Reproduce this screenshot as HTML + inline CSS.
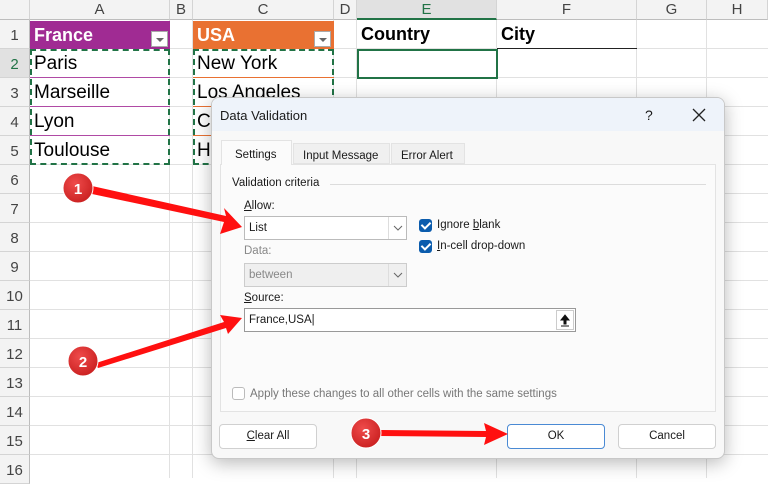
<!DOCTYPE html>
<html><head><style>
*{margin:0;padding:0;box-sizing:border-box}
body{width:768px;height:478px;overflow:hidden;background:#fff;font-family:"Liberation Sans",sans-serif;position:relative}
.a{position:absolute}
.colh{top:0;height:20px;background:#f3f3f3;border-right:1px solid #d4d4d4;border-bottom:1px solid #bdbdbd;text-align:center;font-size:15px;color:#444;line-height:20px}
.rowh{left:0;width:30px;height:29px;background:#f3f3f3;border-bottom:1px solid #d4d4d4;border-right:1px solid #bdbdbd;text-align:center;font-size:15px;color:#444;line-height:31px}
.vl{top:20px;width:1px;height:458px;background:#e1e1e1}
.hl{left:30px;height:1px;width:738px;background:#e1e1e1}
.cell{font-size:19px;color:#000;padding-left:4px;line-height:29px;height:29px}
.dd{width:17px;height:16px;background:#fff;border:1px solid #aaa;top:31px}
.dd:after{content:"";position:absolute;left:4px;top:6px;border:4px solid transparent;border-top:4px solid #666}
.dlg{left:211px;top:97px;width:514px;height:362px;background:#f8f8f8;border:1px solid #c8c8c8;border-radius:8px;box-shadow:0 4px 18px rgba(0,0,0,.28);font-size:11.5px;color:#1a1a1a;overflow:hidden}
.btn{height:25px;background:#fff;border:1px solid #d0d0d0;border-radius:4px;text-align:center;line-height:23px;font-size:11.5px}
.cb{width:13px;height:13px;background:#0b5cad;border-radius:3px}
.cb:after{content:"";position:absolute;left:4px;top:1px;width:4px;height:7px;border:solid #fff;border-width:0 2px 2px 0;transform:rotate(45deg)}
.chev{width:18px;height:22px;border-left:1px solid #ddd}
</style></head><body>
<div class="a colh" style="left:0;width:30px;background:#f3f3f3"></div>
<div class="a colh" style="left:30px;width:140px">A</div>
<div class="a colh" style="left:170px;width:23px">B</div>
<div class="a colh" style="left:193px;width:141px">C</div>
<div class="a colh" style="left:334px;width:23px">D</div>
<div class="a colh" style="left:357px;width:140px;background:#e1e1e1;color:#217346;border-bottom:2px solid #217346">E</div>
<div class="a colh" style="left:497px;width:140px">F</div>
<div class="a colh" style="left:637px;width:70px">G</div>
<div class="a colh" style="left:707px;width:61px">H</div>
<div class="a rowh" style="top:20px">1</div>
<div class="a rowh" style="top:49px;background:#e1e1e1;color:#217346">2</div>
<div class="a rowh" style="top:78px">3</div>
<div class="a rowh" style="top:107px">4</div>
<div class="a rowh" style="top:136px">5</div>
<div class="a rowh" style="top:165px">6</div>
<div class="a rowh" style="top:194px">7</div>
<div class="a rowh" style="top:223px">8</div>
<div class="a rowh" style="top:252px">9</div>
<div class="a rowh" style="top:281px">10</div>
<div class="a rowh" style="top:310px">11</div>
<div class="a rowh" style="top:339px">12</div>
<div class="a rowh" style="top:368px">13</div>
<div class="a rowh" style="top:397px">14</div>
<div class="a rowh" style="top:426px">15</div>
<div class="a rowh" style="top:455px">16</div>
<div class="a vl" style="left:169px"></div><div class="a vl" style="left:192px"></div><div class="a vl" style="left:333px"></div><div class="a vl" style="left:356px"></div><div class="a vl" style="left:496px"></div><div class="a vl" style="left:636px"></div><div class="a vl" style="left:706px"></div>
<div class="a hl" style="top:48px"></div><div class="a hl" style="top:77px"></div><div class="a hl" style="top:106px"></div><div class="a hl" style="top:135px"></div><div class="a hl" style="top:164px"></div><div class="a hl" style="top:193px"></div><div class="a hl" style="top:222px"></div><div class="a hl" style="top:251px"></div><div class="a hl" style="top:280px"></div><div class="a hl" style="top:309px"></div><div class="a hl" style="top:338px"></div><div class="a hl" style="top:367px"></div><div class="a hl" style="top:396px"></div><div class="a hl" style="top:425px"></div><div class="a hl" style="top:454px"></div>
<div class="a cell" style="left:30px;top:21px;width:140px;height:28px;background:#a02b93;color:#fff;font-weight:bold;font-size:18px">France</div>
<div class="a dd" style="left:151px"></div>
<div class="a cell" style="left:30px;top:49px;width:140px;border-bottom:1px solid #b04aa5">Paris</div>
<div class="a cell" style="left:30px;top:78px;width:140px;border-bottom:1px solid #b04aa5">Marseille</div>
<div class="a cell" style="left:30px;top:107px;width:140px;border-bottom:1px solid #b04aa5">Lyon</div>
<div class="a cell" style="left:30px;top:136px;width:140px">Toulouse</div>
<div class="a" style="left:30px;top:49px;width:140px;height:116px;border:2px dashed #217346"></div>
<div class="a cell" style="left:193px;top:21px;width:141px;height:28px;background:#e97132;color:#fff;font-weight:bold;font-size:18px">USA</div>
<div class="a dd" style="left:314px"></div>
<div class="a cell" style="left:193px;top:49px;width:141px;border-bottom:1px solid #e97132">New York</div>
<div class="a cell" style="left:193px;top:78px;width:141px;border-bottom:1px solid #e97132">Los Angeles</div>
<div class="a cell" style="left:193px;top:107px;width:141px;border-bottom:1px solid #e97132">Chicago</div>
<div class="a cell" style="left:193px;top:136px;width:141px">Houston</div>
<div class="a" style="left:193px;top:49px;width:141px;height:116px;border:2px dashed #217346"></div>
<div class="a cell" style="left:357px;top:20px;width:140px;font-weight:bold;font-size:18px">Country</div>
<div class="a cell" style="left:497px;top:20px;width:140px;font-weight:bold;font-size:18px;border-bottom:1px solid #222">City</div>
<div class="a" style="left:357px;top:49px;width:141px;height:30px;border:2px solid #217346;background:#fff"></div>
<div class="a dlg">
 <div class="a" style="left:0;top:0;width:514px;height:33px;background:#eef3fa"></div>
 <div class="a" style="left:8px;top:10px;font-size:13px">Data Validation</div>
 <div class="a" style="left:433px;top:9px;font-size:14px">?</div>
 <svg class="a" style="left:480px;top:10px" width="14" height="14"><path d="M1 1L13 13M13 1L1 13" stroke="#222" stroke-width="1.3"/></svg>
 <div class="a" style="left:8px;top:66px;width:496px;height:248px;background:#fbfbfb;border:1px solid #e3e3e3"></div>
 <div class="a" style="left:9px;top:42px;width:71px;height:25px;background:#fbfbfb;border:1px solid #e3e3e3;border-bottom:none;padding:8px 0 0 13px">Settings</div>
 <div class="a" style="left:81px;top:45px;width:97px;height:21px;background:#f0f0f0;border:1px solid #e3e3e3;padding:6px 0 0 9px">Input Message</div>
 <div class="a" style="left:179px;top:45px;width:74px;height:21px;background:#f0f0f0;border:1px solid #e3e3e3;padding:6px 0 0 9px">Error Alert</div>
 <div class="a" style="left:20px;top:79px">Validation criteria</div>
 <div class="a" style="left:118px;top:86px;width:376px;height:1px;background:#dcdcdc"></div>
 <div class="a" style="left:32px;top:102px"><u>A</u>llow:</div>
 <div class="a" style="left:32px;top:118px;width:163px;height:24px;background:#fff;border:1px solid #bbb;padding:5px 4px">List</div>
 <div class="a chev" style="left:176px;top:119px"><svg width="18" height="22"><path d="M5 9L9 13L13 9" fill="none" stroke="#666"/></svg></div>
 <div class="a" style="left:32px;top:147px;color:#888">Data:</div>
 <div class="a" style="left:32px;top:165px;width:163px;height:24px;background:#efefef;border:1px solid #ccc;padding:5px 4px;color:#888">between</div>
 <div class="a chev" style="left:176px;top:166px"><svg width="18" height="22"><path d="M5 9L9 13L13 9" fill="none" stroke="#666"/></svg></div>
 <div class="a" style="left:32px;top:194px"><u>S</u>ource:</div>
 <div class="a" style="left:32px;top:210px;width:332px;height:24px;background:#fff;border:1px solid #999;padding:5px 4px">France,USA|</div>
 <div class="a" style="left:344px;top:212px;width:18px;height:20px;border:1px solid #ccc;background:#fff"><svg width="16" height="18"><path d="M8 4L4 9H7V13H9V9H12Z M4 15H12" fill="#111" stroke="#111" stroke-width="1"/></svg></div>
 <div class="a cb" style="left:207px;top:121px"></div>
 <div class="a" style="left:225px;top:121px">Ignore <u>b</u>lank</div>
 <div class="a cb" style="left:207px;top:142px"></div>
 <div class="a" style="left:225px;top:142px"><u>I</u>n-cell drop-down</div>
 <div class="a" style="left:20px;top:289px;width:13px;height:13px;border:1px solid #bbb;border-radius:3px;background:#fff"></div>
 <div class="a" style="left:38px;top:290px;color:#777">Apply these changes to all other cells with the same settings</div>
 <div class="a btn" style="left:7px;top:326px;width:98px"><u>C</u>lear All</div>
 <div class="a btn" style="left:295px;top:326px;width:98px;border-color:#4a8ad4">OK</div>
 <div class="a btn" style="left:406px;top:326px;width:98px">Cancel</div>
</div>
<svg class="a" style="left:0;top:0" width="768" height="478">
 <defs><radialGradient id="g" cx=".4" cy=".35" r=".7"><stop offset="0" stop-color="#ef4b4b"/><stop offset="1" stop-color="#c91f1f"/></radialGradient></defs>
 <polygon points="92,186 226,216 224,208 242,227 220,234 224,222 92,194" fill="#ff1010"/>
 <polygon points="96,363 224,322 220,315 242,318 228,334 226,328 98,368" fill="#ff1010"/>
 <polygon points="380,430 486,431 484,423 508,434 484,445 486,437 380,436" fill="#ff1010"/>
 <circle cx="78" cy="188" r="15" fill="url(#g)" stroke="#fff" stroke-width="1"/>
 <circle cx="83" cy="361" r="15" fill="url(#g)" stroke="#fff" stroke-width="1"/>
 <circle cx="366" cy="433" r="15" fill="url(#g)" stroke="#fff" stroke-width="1"/>
 <text x="78" y="194" fill="#fff" font-size="15" font-weight="bold" text-anchor="middle" font-family="Liberation Sans">1</text>
 <text x="83" y="367" fill="#fff" font-size="15" font-weight="bold" text-anchor="middle" font-family="Liberation Sans">2</text>
 <text x="366" y="439" fill="#fff" font-size="15" font-weight="bold" text-anchor="middle" font-family="Liberation Sans">3</text>
</svg>
</body></html>
